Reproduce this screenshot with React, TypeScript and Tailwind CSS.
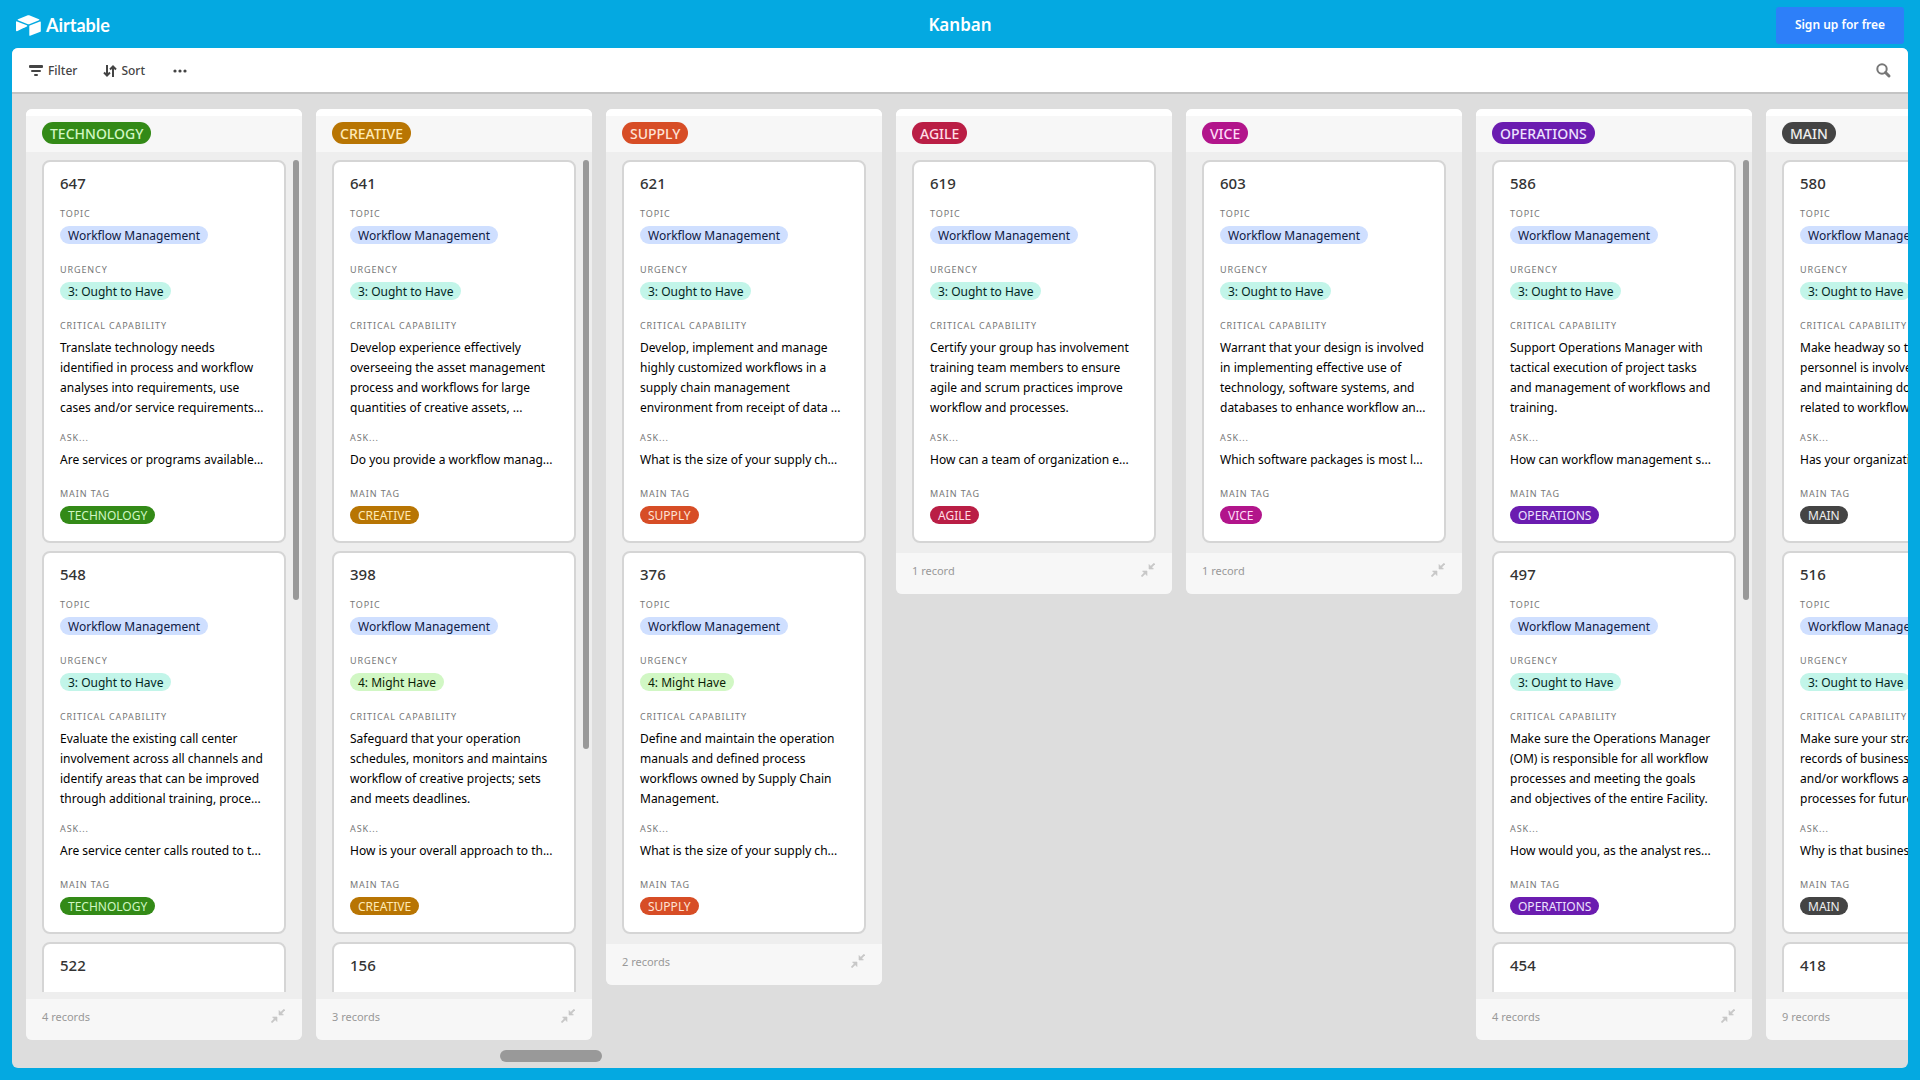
import clsx from "clsx";

type CardItem = {
  id: string;
  urgency?: "ought" | "might";
  capability?: string;
  ask?: string;
};

type Column = {
  tag: string;
  color: string;
  records: number;
  thumb?: string;
  cards: CardItem[];
};

const URGENCY = {
  ought: { label: "3: Ought to Have", color: "bg-[#c2f5e9] text-[#012524]" },
  might: { label: "4: Might Have", color: "bg-[#d1f7c4] text-[#0b1d05]" },
};

const COLUMNS: Column[] = [
  {
    tag: "TECHNOLOGY",
    color: "bg-[#338a17] text-[#d1f7c4]",
    records: 4,
    thumb: "h-[440px]",
    cards: [
      {
        id: "647",
        urgency: "ought",
        capability:
          "Translate technology needs\nidentified in process and workflow\nanalyses into requirements, use\ncases and/or service requirements...",
        ask: "Are services or programs available...",
      },
      {
        id: "548",
        urgency: "ought",
        capability:
          "Evaluate the existing call center\ninvolvement across all channels and\nidentify areas that can be improved\nthrough additional training, proce...",
        ask: "Are service center calls routed to t...",
      },
      { id: "522" },
    ],
  },
  {
    tag: "CREATIVE",
    color: "bg-[#b87503] text-[#ffeab6]",
    records: 3,
    thumb: "h-[589px]",
    cards: [
      {
        id: "641",
        urgency: "ought",
        capability:
          "Develop experience effectively\noverseeing the asset management\nprocess and workflows for large\nquantities of creative assets, ...",
        ask: "Do you provide a workflow manag...",
      },
      {
        id: "398",
        urgency: "might",
        capability:
          "Safeguard that your operation\nschedules, monitors and maintains\nworkflow of creative projects; sets\nand meets deadlines.",
        ask: "How is your overall approach to th...",
      },
      { id: "156" },
    ],
  },
  {
    tag: "SUPPLY",
    color: "bg-[#d74d26] text-[#fee2d5]",
    records: 2,
    cards: [
      {
        id: "621",
        urgency: "ought",
        capability:
          "Develop, implement and manage\nhighly customized workflows in a\nsupply chain management\nenvironment from receipt of data ...",
        ask: "What is the size of your supply ch...",
      },
      {
        id: "376",
        urgency: "might",
        capability:
          "Define and maintain the operation\nmanuals and defined process\nworkflows owned by Supply Chain\nManagement.",
        ask: "What is the size of your supply ch...",
      },
    ],
  },
  {
    tag: "AGILE",
    color: "bg-[#ba1e45] text-[#ffdce5]",
    records: 1,
    cards: [
      {
        id: "619",
        urgency: "ought",
        capability:
          "Certify your group has involvement\ntraining team members to ensure\nagile and scrum practices improve\nworkflow and processes.",
        ask: "How can a team of organization e...",
      },
    ],
  },
  {
    tag: "VICE",
    color: "bg-[#b2158b] text-[#ffdaf6]",
    records: 1,
    cards: [
      {
        id: "603",
        urgency: "ought",
        capability:
          "Warrant that your design is involved\nin implementing effective use of\ntechnology, software systems, and\ndatabases to enhance workflow an...",
        ask: "Which software packages is most l...",
      },
    ],
  },
  {
    tag: "OPERATIONS",
    color: "bg-[#6b1cb0] text-[#ede2fe]",
    records: 4,
    thumb: "h-[440px]",
    cards: [
      {
        id: "586",
        urgency: "ought",
        capability:
          "Support Operations Manager with\ntactical execution of project tasks\nand management of workflows and\ntraining.",
        ask: "How can workflow management s...",
      },
      {
        id: "497",
        urgency: "ought",
        capability:
          "Make sure the Operations Manager\n(OM) is responsible for all workflow\nprocesses and meeting the goals\nand objectives of the entire Facility.",
        ask: "How would you, as the analyst res...",
      },
      { id: "454" },
    ],
  },
  {
    tag: "MAIN",
    color: "bg-[#444444] text-[#eeeeee]",
    records: 9,
    thumb: "h-[196px]",
    cards: [
      {
        id: "580",
        urgency: "ought",
        capability:
          "Make headway so that all\npersonnel is involved in creating\nand maintaining documentation\nrelated to workflow processes.",
        ask: "Has your organization developed...",
      },
      {
        id: "516",
        urgency: "ought",
        capability:
          "Make sure your strategy includes\nrecords of business processes\nand/or workflows and improves\nprocesses for future workflows.",
        ask: "Why is that business process in...",
      },
      { id: "418" },
    ],
  },
];

const CollapseIcon = () => (
  <svg width="14" height="14" viewBox="0 0 14 14" fill="#c8c8c8" stroke="#c8c8c8" aria-hidden="true">
    <path d="M8 1.5V6h4.500z" strokeWidth="0.600" />
    <path d="m9.500 4.500 4-4" strokeWidth="1.800" />
    <path d="M6 12.500V8H1.500z" strokeWidth="0.600" />
    <path d="m4.500 9.500-4 4" strokeWidth="1.800" />
  </svg>
);

const Pill = ({ label, color }: { label: string; color: string }) => (
  <div className="flex h-[38px] items-start">
    <span className={clsx("flex h-[18px] items-center rounded-full px-2 pt-0.5 text-[12px]", color)}>{label}</span>
  </div>
);

const Label = ({ children }: { children: string }) => (
  <div className="h-[18px] text-[9px] leading-[12px] tracking-widest text-[#777]">{children}</div>
);

const Card = ({ item, column }: { item: CardItem; column: Column }) => {
  const urgency = item.urgency && URGENCY[item.urgency];

  return (
    <article className="h-[383px] shrink-0 rounded-lg border-2 border-[#d5d5d5] bg-white px-4 pt-3">
      <h3 className="h-[34px] text-[15px] leading-[18px] font-medium text-[#333]">{item.id}</h3>
      {urgency && (
        <>
          <Label>TOPIC</Label>
          <Pill label="Workflow Management" color="bg-[#cfdfff] text-[#102046]" />
          <Label>URGENCY</Label>
          <Pill label={urgency.label} color={urgency.color} />
          <Label>CRITICAL CAPABILITY</Label>
          <p className="h-[94px] text-[12px] leading-[20px] whitespace-pre text-black">{item.capability}</p>
          <Label>ASK...</Label>
          <p className="h-[38px] text-[12px] leading-[20px] whitespace-pre text-black">{item.ask}</p>
          <Label>MAIN TAG</Label>
          <Pill label={column.tag} color={column.color} />
        </>
      )}
    </article>
  );
};

const BoardColumn = ({ column }: { column: Column }) => (
  <section className="relative flex max-h-full w-[276px] shrink-0 flex-col overflow-hidden rounded-md bg-[#eee]">
    <header className="flex h-[43px] shrink-0 items-start border-t-[7px] border-white bg-[#f7f7f7] px-4 pt-[6px]">
      <h2 className={clsx("flex h-[22px] items-center rounded-full px-2 text-[14px] font-medium", column.color)}>
        {column.tag}
      </h2>
    </header>
    <div className="mt-2 mb-[7px] flex min-h-0 flex-col gap-2 overflow-hidden px-4 pb-[3px]">
      {column.cards.map((item) => (
        <Card key={item.id} item={item} column={column} />
      ))}
    </div>
    {column.thumb && <div className={clsx("absolute top-[51px] right-[3px] w-[6px] rounded-full bg-[#999]", column.thumb)} />}
    <footer className="flex h-[41px] shrink-0 items-start justify-between bg-[#f7f7f7] pt-[10px] pr-[17px] pl-4">
      <span className="text-[11px] leading-[16px] text-[#999]">
        {`${column.records} ${column.records === 1 ? "record" : "records"}`}
      </span>
      <button type="button" aria-label={`Collapse ${column.tag}`}>
        <CollapseIcon />
      </button>
    </footer>
  </section>
);

const Logo = () => (
  <a href="#" className="flex items-center gap-[5px] text-white">
    <svg width="25" height="21" viewBox="0 0 25 21" fill="currentColor" aria-hidden="true">
      <path d="M11.2.4 2 4.2c-.5.2-.5.9 0 1.1l9.3 3.7c.8.3 1.7.3 2.5 0L23 5.300c.5-.2.5-.9 0-1.100L13.800.4c-.8-.3-1.800-.3-2.600 0z" />
      <path d="M13.300 11v9.200c0 .4.400.7.800.600l10.300-4c.2-.1.400-.3.400-.6V7c0-.4-.400-.7-.800-.6l-10.300 4c-.2.100-.4.300-.4.600z" />
      <path d="m10.900 11.500-3 1.500-.4.100-6.500 3.100c-.4.200-1-.1-1-.6V7c0-.5.500-.8 1-.6l9.800 3.900c.6.200.6 1 .1 1.200z" />
    </svg>
    <span className="font-['Lato'] text-[18px] leading-[24px] font-bold">Airtable</span>
  </a>
);

const App = () => (
  <div className="flex h-screen flex-col overflow-hidden bg-[#04a9e1] px-3 pb-3 font-['Noto_Sans','Segoe_UI',sans-serif]">
    <header className="grid h-12 shrink-0 grid-cols-3 items-center px-1 pt-0.5">
      <Logo />
      <h1 className="text-center text-[17px] font-semibold text-white">Kanban</h1>
      <a
        href="#"
        className="flex h-[37px] w-32 items-center justify-center justify-self-end rounded-[3px] bg-[#2d7ff9] text-[12px] font-semibold text-white"
      >
        Sign up for free
      </a>
    </header>
    <main className="flex min-h-0 flex-1 flex-col overflow-hidden rounded-md bg-[#ddd]">
      <div className="flex h-[46px] shrink-0 items-center border-b-2 border-[#c4c4c4] bg-white px-4 pt-0.5 text-[12px] font-medium text-[#444]">
        <button type="button" className="flex items-center gap-1">
          <svg width="16" height="12" viewBox="0 0 16 12" fill="currentColor" aria-hidden="true">
            <rect x="1" y="0" width="14" height="3" rx="1" />
            <rect x="3" y="5" width="10" height="2" rx="1" />
            <rect x="6" y="9" width="4" height="2" rx="1" />
          </svg>
          Filter
        </button>
        <button type="button" className="ml-[26px] flex items-center gap-1">
          <svg width="14" height="12" viewBox="0 0 14 12" aria-hidden="true">
            <path d="M4 0v10M1 7.500l3 3 3-3M10 12V2M7 4.500l3-3 3 3" fill="none" stroke="currentColor" strokeWidth="2" />
          </svg>
          Sort
        </button>
        <button type="button" aria-label="More options" className="ml-7">
          <svg width="14" height="4" viewBox="0 0 14 4" fill="currentColor" aria-hidden="true">
            <circle cx="2" cy="2" r="1.600" />
            <circle cx="7" cy="2" r="1.600" />
            <circle cx="12" cy="2" r="1.600" />
          </svg>
        </button>
        <button type="button" aria-label="Search" className="ml-auto text-[#777]">
          <svg width="16" height="16" viewBox="0 0 16 16" fill="none" stroke="currentColor" aria-hidden="true">
            <circle cx="6" cy="6" r="4.700" strokeWidth="2" />
            <path d="m9.500 9.500 3.500 3.500" strokeWidth="3" strokeLinecap="round" />
          </svg>
        </button>
      </div>
      <div className="flex min-h-0 flex-1 items-start gap-[14px] overflow-hidden px-[14px] pt-[15px] pb-[10px]">
        {COLUMNS.map((column) => (
          <BoardColumn key={column.tag} column={column} />
        ))}
      </div>
      <div className="h-[18px] shrink-0 px-[488px]">
        <div className="h-3 w-[102px] rounded-full bg-[#999]" />
      </div>
    </main>
  </div>
);

export default App;
